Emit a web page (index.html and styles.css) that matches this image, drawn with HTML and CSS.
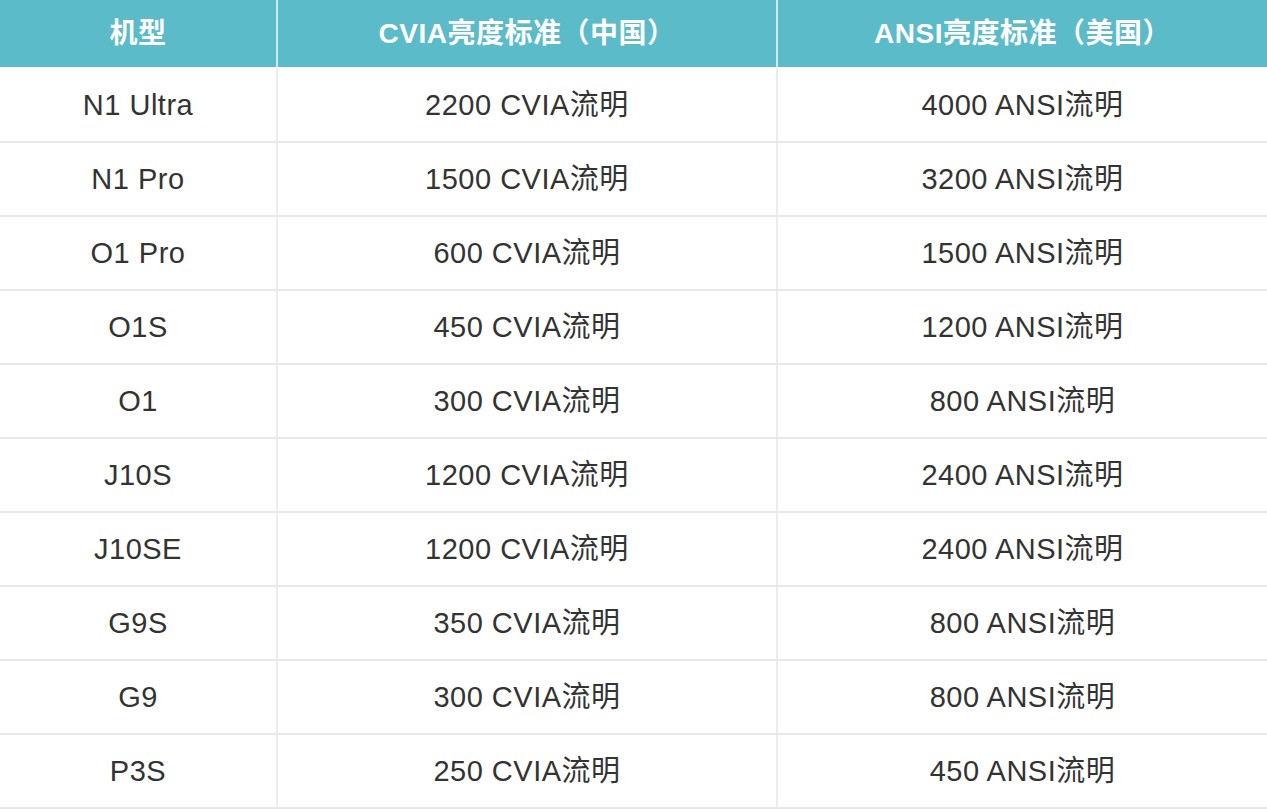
FILE: index.html
```html
<!DOCTYPE html>
<html lang="zh">
<head>
<meta charset="utf-8">
<link rel="stylesheet" href="styles.css">
</head>
<body>
<table class="spec">
  <colgroup><col class="c1"><col class="c2"><col class="c3"></colgroup>
  <thead>
    <tr><th>机型</th><th>CVIA亮度标准（中国）</th><th>ANSI亮度标准（美国）</th></tr>
  </thead>
  <tbody>
    <tr><td>N1 Ultra</td><td>2200 CVIA流明</td><td>4000 ANSI流明</td></tr>
    <tr><td>N1 Pro</td><td>1500 CVIA流明</td><td>3200 ANSI流明</td></tr>
    <tr><td>O1 Pro</td><td>600 CVIA流明</td><td>1500 ANSI流明</td></tr>
    <tr><td>O1S</td><td>450 CVIA流明</td><td>1200 ANSI流明</td></tr>
    <tr><td>O1</td><td>300 CVIA流明</td><td>800 ANSI流明</td></tr>
    <tr><td>J10S</td><td>1200 CVIA流明</td><td>2400 ANSI流明</td></tr>
    <tr><td>J10SE</td><td>1200 CVIA流明</td><td>2400 ANSI流明</td></tr>
    <tr><td>G9S</td><td>350 CVIA流明</td><td>800 ANSI流明</td></tr>
    <tr><td>G9</td><td>300 CVIA流明</td><td>800 ANSI流明</td></tr>
    <tr><td>P3S</td><td>250 CVIA流明</td><td>450 ANSI流明</td></tr>
  </tbody>
</table>
</body>
</html>
```
FILE: styles.css
```css
html, body {
  margin: 0;
  padding: 0;
  background: #ffffff;
}
body {
  font-family: "Liberation Sans", "Noto Sans CJK SC", sans-serif;
  color: #333333;
}
.spec {
  width: 1267px;
  border-collapse: collapse;
  table-layout: fixed;
}
.c1 { width: 277px; }
.c2 { width: 500px; }
.c3 { width: 490px; }
.spec th {
  height: 67px;
  padding: 0;
  background: #5bbbc8;
  color: #ffffff;
  font-size: 28px;
  line-height: 1.2;
  font-weight: bold;
  letter-spacing: 0.5px;
  text-align: center;
  vertical-align: middle;
  border-left: 2px solid #cfeaee;
  border-bottom: 2px solid #ffffff;
}
.spec th:first-child { border-left: none; }
.spec td {
  height: 72px;
  padding: 0;
  text-align: center;
  vertical-align: middle;
  font-size: 29px;
  line-height: 1.2;
  letter-spacing: 0.5px;
  border-left: 2px solid #ececec;
  border-bottom: 2px solid #e8e8e8;
}
.spec td:first-child { border-left: none; }
```
